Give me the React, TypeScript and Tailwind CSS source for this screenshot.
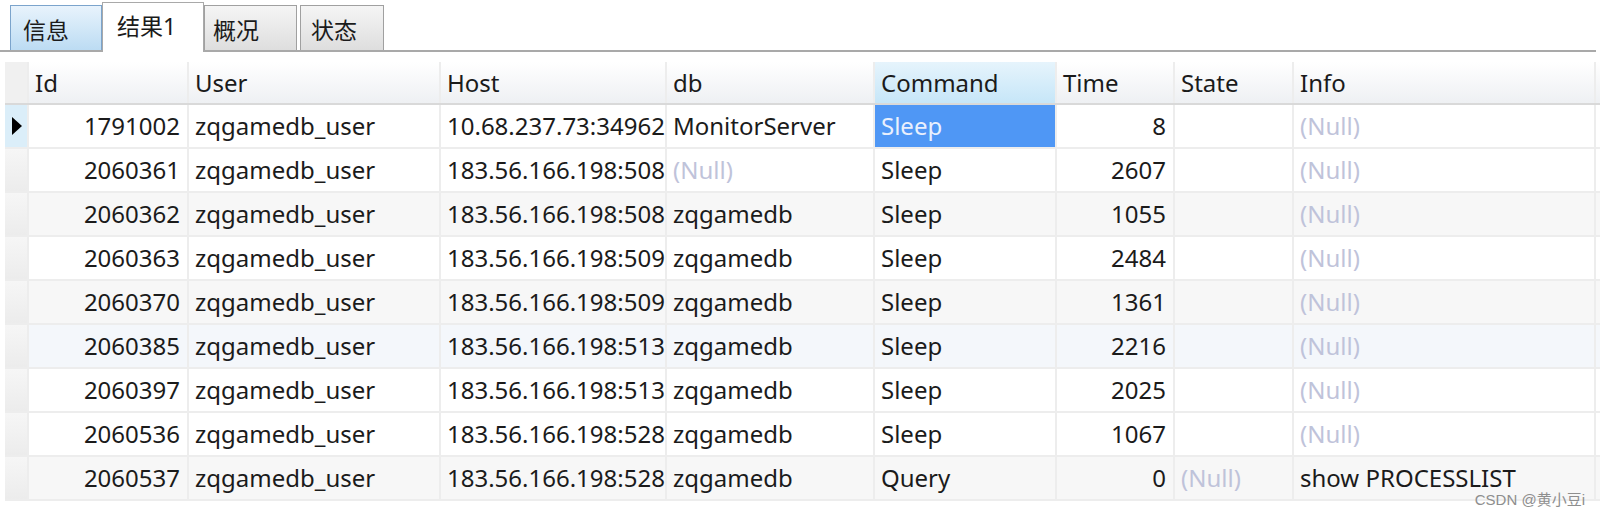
import React from "react";

const FONT = { fontFamily: '"Noto Sans", "Noto Sans CJK SC", sans-serif' };

type Row = {
  id: string;
  host: string;
  db: string | null;
  cmd: string;
  time: string;
  state: string | null;
  info: string | null;
  bg: string;
};

const rows: Row[] = [
  { id: "1791002", host: "10.68.237.73:34962", db: "MonitorServer", cmd: "Sleep", time: "8", state: "", info: null, bg: "bg-white" },
  { id: "2060361", host: "183.56.166.198:508", db: null, cmd: "Sleep", time: "2607", state: "", info: null, bg: "bg-white" },
  { id: "2060362", host: "183.56.166.198:508", db: "zqgamedb", cmd: "Sleep", time: "1055", state: "", info: null, bg: "bg-[#f7f7f7]" },
  { id: "2060363", host: "183.56.166.198:509", db: "zqgamedb", cmd: "Sleep", time: "2484", state: "", info: null, bg: "bg-white" },
  { id: "2060370", host: "183.56.166.198:509", db: "zqgamedb", cmd: "Sleep", time: "1361", state: "", info: null, bg: "bg-[#f7f7f7]" },
  { id: "2060385", host: "183.56.166.198:513", db: "zqgamedb", cmd: "Sleep", time: "2216", state: "", info: null, bg: "bg-[#f4f7fb]" },
  { id: "2060397", host: "183.56.166.198:513", db: "zqgamedb", cmd: "Sleep", time: "2025", state: "", info: null, bg: "bg-white" },
  { id: "2060536", host: "183.56.166.198:528", db: "zqgamedb", cmd: "Sleep", time: "1067", state: "", info: null, bg: "bg-white" },
  { id: "2060537", host: "183.56.166.198:528", db: "zqgamedb", cmd: "Query", time: "0", state: null, info: "show PROCESSLIST", bg: "bg-[#f7f7f7]" },
];

const widths = ["w-[24px]", "w-[160px]", "w-[252px]", "w-[226px]", "w-[208px]", "w-[182px]", "w-[118px]", "w-[119px]", "w-[302px]"];

function Null() {
  return <span className="text-[#bfc3da]">(Null)</span>;
}

function Cell({ w, children, right, extra }: { w: string; children?: React.ReactNode; right?: boolean; extra?: string }) {
  return (
    <div
      className={`${w} shrink-0 h-full flex items-center border-r-2 border-[#ededed] overflow-hidden whitespace-nowrap ${right ? "justify-end pr-[7px]" : "pl-[6px]"} ${extra ?? ""}`}
    >
      {children}
    </div>
  );
}

export default function App() {
  return (
    <div className="relative w-[1600px] h-[512px] bg-white overflow-hidden text-[#1b1b1b]" style={FONT}>
      {/* Tab strip */}
      <div className="relative h-[52px]">
        <div className="absolute left-0 right-[4px] top-[50px] h-[2px] bg-[#a9a9a9]" />
        <div className="flex items-end h-[52px] pl-[10px] text-[23px]">
          <div className="w-[92px] h-[45px] border border-[#7ba4cc] border-b-0 bg-gradient-to-b from-[#e8f3fc] to-[#bcdcf3] flex items-center pl-[12px] pt-[4px] mb-[2px]">
            信息
          </div>
          <div className="relative z-10 w-[102px] h-[50px] border border-[#a9a9a9] border-b-0 bg-white flex items-center pl-[14px] pb-[2px]">
            结果1
          </div>
          <div className="w-[93px] h-[45px] border border-[#a0a0a0] border-b-0 bg-gradient-to-b from-[#f5f5f5] to-[#dedede] flex items-center pl-[8px] pt-[4px] mr-[3px] mb-[2px]">
            概况
          </div>
          <div className="w-[84px] h-[45px] border border-[#a0a0a0] border-b-0 bg-gradient-to-b from-[#f5f5f5] to-[#dedede] flex items-center pl-[10px] pt-[4px] mb-[2px]">
            状态
          </div>
        </div>
      </div>

      {/* Grid */}
      <div className="pl-[5px] pt-[10px] text-[24px]">
        {/* header */}
        <div className="flex h-[43px] border-b-2 border-[#d9d9d9] bg-gradient-to-b from-[#ffffff] to-[#eef0f3]">
          <Cell w={widths[0]} extra="bg-[#f0f0f0] border-[#e2e2e2]" />
          <Cell w={widths[1]}>Id</Cell>
          <Cell w={widths[2]}>User</Cell>
          <Cell w={widths[3]}>Host</Cell>
          <Cell w={widths[4]}>db</Cell>
          <Cell w={widths[5]} extra="bg-gradient-to-b from-[#e6f4fc] to-[#c6e6f8]">Command</Cell>
          <Cell w={widths[6]}>Time</Cell>
          <Cell w={widths[7]}>State</Cell>
          <Cell w={widths[8]} extra="border-r-0">Info</Cell>
        </div>
        {rows.map((r, i) => (
          <div key={r.id} className={`flex h-[44px] border-b-2 border-[#ededed] ${r.bg}`}>
            <Cell
              w={widths[0]}
              extra={i === 0 ? "bg-[#dbeef9] border-[#e2e2e2] pl-[5px]" : "bg-gradient-to-b from-[#f6f6f6] to-[#ececec] border-[#e2e2e2]"}
            >
              {i === 0 ? (
                <svg width="12" height="20" viewBox="0 0 12 20">
                  <polygon points="1,1 11,10 1,19" fill="#000" />
                </svg>
              ) : null}
            </Cell>
            <Cell w={widths[1]} right>{r.id}</Cell>
            <Cell w={widths[2]}>zqgamedb_user</Cell>
            <Cell w={widths[3]}>{r.host}</Cell>
            <Cell w={widths[4]}>{r.db === null ? <Null /> : r.db}</Cell>
            <Cell w={widths[5]} extra={i === 0 ? "bg-[#4f97f5] text-[#e9f0fd]" : ""}>{r.cmd}</Cell>
            <Cell w={widths[6]} right>{r.time}</Cell>
            <Cell w={widths[7]}>{r.state === null ? <Null /> : r.state}</Cell>
            <Cell w={widths[8]} extra="border-r-0">{r.info === null ? <Null /> : r.info}</Cell>
          </div>
        ))}
      </div>

      <div
        className="absolute right-[15px] top-[492px] text-[15px] text-[#8e8e8e] leading-none"
        style={{ fontFamily: '"Liberation Sans", "Noto Sans CJK SC", sans-serif' }}
      >
        CSDN @黄小豆i
      </div>
    </div>
  );
}
